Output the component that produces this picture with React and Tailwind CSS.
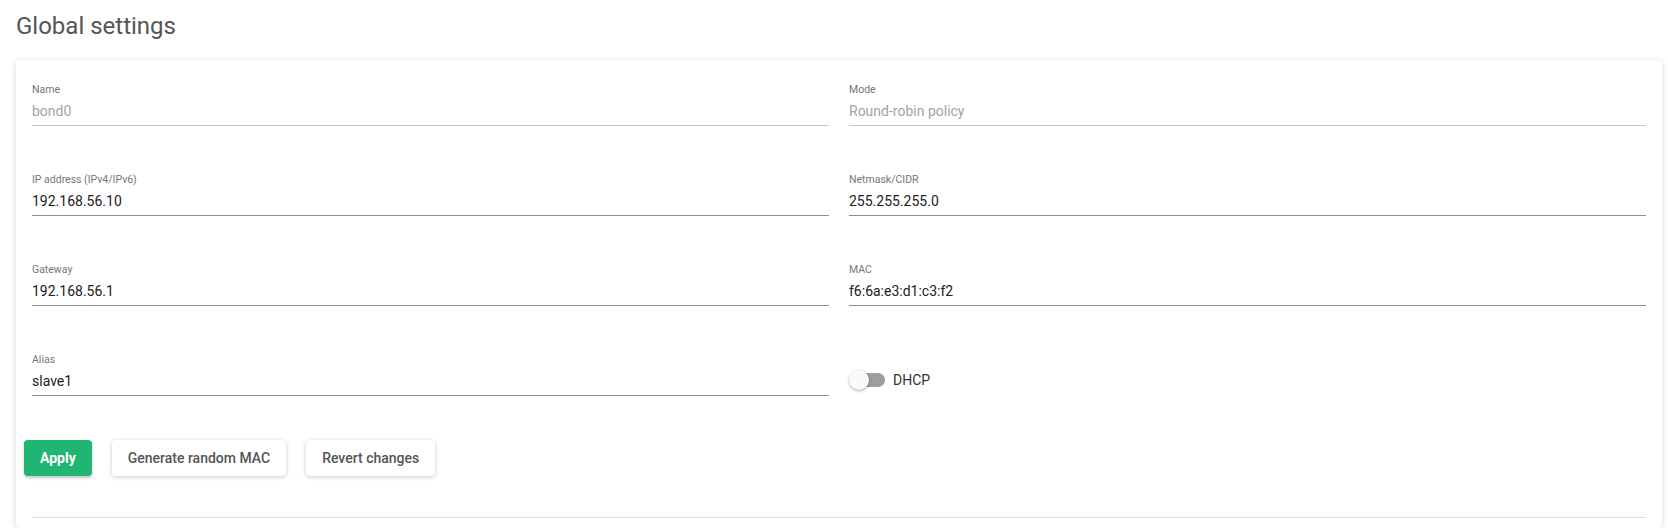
import React from "react";

function Field({ label, value, disabled }) {
  return (
    <div className="flex flex-col">
      <div className="text-[10.5px] leading-[12px] text-[#757575] mb-[5px]">{label}</div>
      <div
        className={
          "text-[14px] leading-[20px] pb-[4px] border-b " +
          (disabled
            ? "text-[#a3a3a3] border-[#c3c8cc]"
            : "text-[#212121] border-[#8f8f8f]")
        }
      >
        {value}
      </div>
    </div>
  );
}

export default function App() {
  return (
    <div className="bg-white min-h-[528px] font-['Roboto',sans-serif]">
      <div className="pl-4 pt-[10px] text-[24px] leading-[32px] text-[#555555]">Global settings</div>
      <div className="mt-[18px] ml-4 mr-[6px] bg-white rounded-[4px] shadow-[0_1px_6px_rgba(0,0,0,0.16)] px-4 pt-6 pb-[10px]">
        <div className="grid grid-cols-2 gap-x-5 gap-y-[48px]">
          <Field label="Name" value="bond0" disabled />
          <Field label="Mode" value="Round-robin policy" disabled />
          <Field label="IP address (IPv4/IPv6)" value="192.168.56.10" />
          <Field label="Netmask/CIDR" value="255.255.255.0" />
          <Field label="Gateway" value="192.168.56.1" />
          <Field label="MAC" value="f6:6a:e3:d1:c3:f2" />
          <Field label="Alias" value="slave1" />
          <div className="flex items-end pb-[6px]">
            <div className="flex items-center">
              <div className="relative w-[36px] h-[20px] flex items-center">
                <div className="ml-[2px] w-[34px] h-[14px] rounded-full bg-[#9e9e9e]" />
                <div className="absolute left-0 top-0 w-[20px] h-[20px] rounded-full bg-[#fafafa] shadow-[0_1px_3px_rgba(0,0,0,0.35)]" />
              </div>
              <span className="ml-[8px] text-[14px] leading-[20px] text-[#333333]">DHCP</span>
            </div>
          </div>
        </div>
        <div className="mt-11 -ml-2 flex gap-5">
          <button className="h-[36px] px-4 rounded-[4px] bg-[#21b573] text-white text-[14px] font-bold shadow-[0_2px_3px_rgba(0,0,0,0.22)]">
            Apply
          </button>
          <button className="h-[36px] px-4 rounded-[4px] bg-white text-[#555555] text-[14px] font-medium shadow-[0_1px_4px_rgba(0,0,0,0.22)]">
            Generate random MAC
          </button>
          <button className="h-[36px] px-4 rounded-[4px] bg-white text-[#555555] text-[14px] font-medium shadow-[0_1px_4px_rgba(0,0,0,0.22)]">
            Revert changes
          </button>
        </div>
        <div className="mt-[41px] border-t border-[#e0e0e0]" />
      </div>
    </div>
  );
}
